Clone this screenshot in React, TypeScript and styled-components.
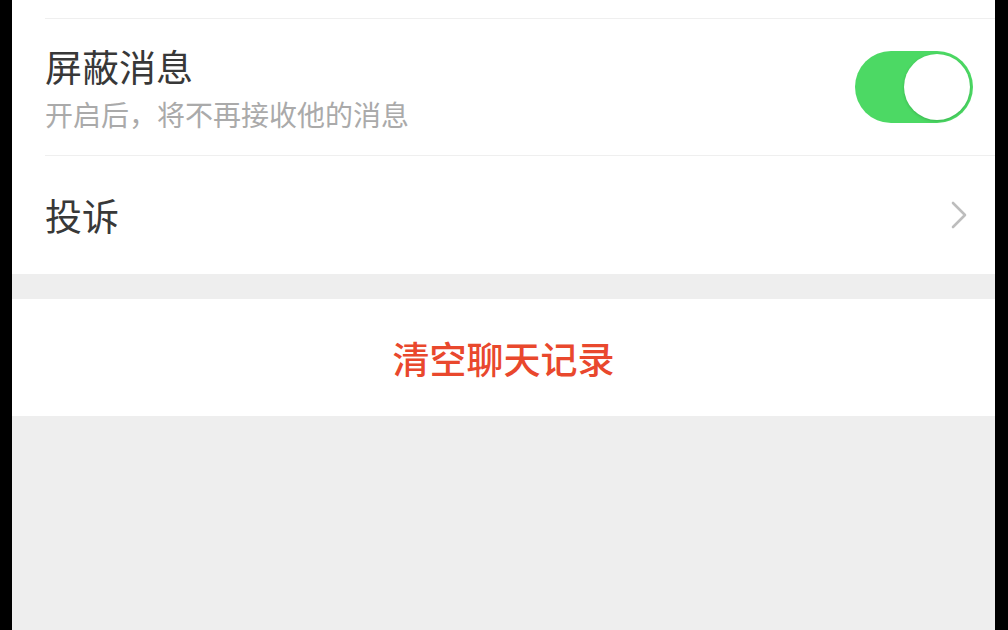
import React from 'react';
import styled, { createGlobalStyle } from 'styled-components';

const GlobalStyle = createGlobalStyle`
	html, body {
		margin: 0;
		padding: 0;
		height: 100%;
		background: #000;
	}
	#root {
		height: 100%;
	}
	* {
		box-sizing: border-box;
	}
`;

const Screen = styled.div`
	display: flex;
	height: 630px;
	padding: 0 13px 0 12px;
	background: #000;
	overflow: hidden;
	font-family: 'Noto Sans CJK SC', 'Noto Sans', sans-serif;
`;

const Page = styled.div`
	flex: 1;
	display: flex;
	flex-direction: column;
	background: #eeeeee;
`;

const Group = styled.div`
	display: flex;
	flex-direction: column;
	background: #fff;
	padding-left: 33px;
`;

const TopSpace = styled.div`
	height: 18px;
`;

const Divider = styled.div`
	height: 1px;
	background: #efefef;
`;

const Cell = styled.div<{ height: number }>`
	display: flex;
	align-items: center;
	justify-content: space-between;
	height: ${({ height }): number => height}px;
	padding-right: ${({ height }): number => (height > 120 ? 22 : 28)}px;
`;

const Texts = styled.div`
	display: flex;
	flex-direction: column;
`;

const Title = styled.div`
	font-size: 37px;
	line-height: 44px;
	color: #383838;
`;

const Subtitle = styled.div`
	margin-top: 9px;
	font-size: 28px;
	line-height: 34px;
	color: #aaaaaa;
`;

const Toggle = styled.div<{ on?: boolean }>`
	position: relative;
	width: 118px;
	height: 72px;
	border-radius: 36px;
	background: ${({ on }): string => (on ? '#4cd964' : '#e5e5e5')};
`;

const Knob = styled.div<{ on?: boolean }>`
	position: absolute;
	top: 3px;
	left: ${({ on }): number => (on ? 49 : 3)}px;
	width: 66px;
	height: 66px;
	border-radius: 50%;
	background: #fff;
	box-shadow: 0 1px 3px rgba(0, 80, 20, 0.25);
`;

const Gap = styled.div`
	height: 25px;
`;

const ActionCell = styled.div`
	display: flex;
	align-items: center;
	justify-content: center;
	height: 117px;
	background: #fff;
	font-size: 37px;
	font-weight: 500;
	color: #e9482d;
`;

const Chevron = (): React.ReactElement => (
	<svg width="16" height="30" viewBox="0 0 16 30">
		<polyline
			points="2,3 14,15 2,27"
			fill="none"
			stroke="#bdbdbd"
			strokeWidth="2.6"
			strokeLinecap="round"
			strokeLinejoin="round"
		/>
	</svg>
);

export default function App(): React.ReactElement {
	return (
		<>
			<GlobalStyle />
			<Screen>
				<Page>
					<Group>
						<TopSpace />
						<Divider />
						<Cell height={136}>
							<Texts>
								<Title>屏蔽消息</Title>
								<Subtitle>开启后，将不再接收他的消息</Subtitle>
							</Texts>
							<Toggle on>
								<Knob on />
							</Toggle>
						</Cell>
						<Divider />
						<Cell height={118}>
							<Title>投诉</Title>
							<Chevron />
						</Cell>
					</Group>
					<Gap />
					<ActionCell>清空聊天记录</ActionCell>
				</Page>
			</Screen>
		</>
	);
}
